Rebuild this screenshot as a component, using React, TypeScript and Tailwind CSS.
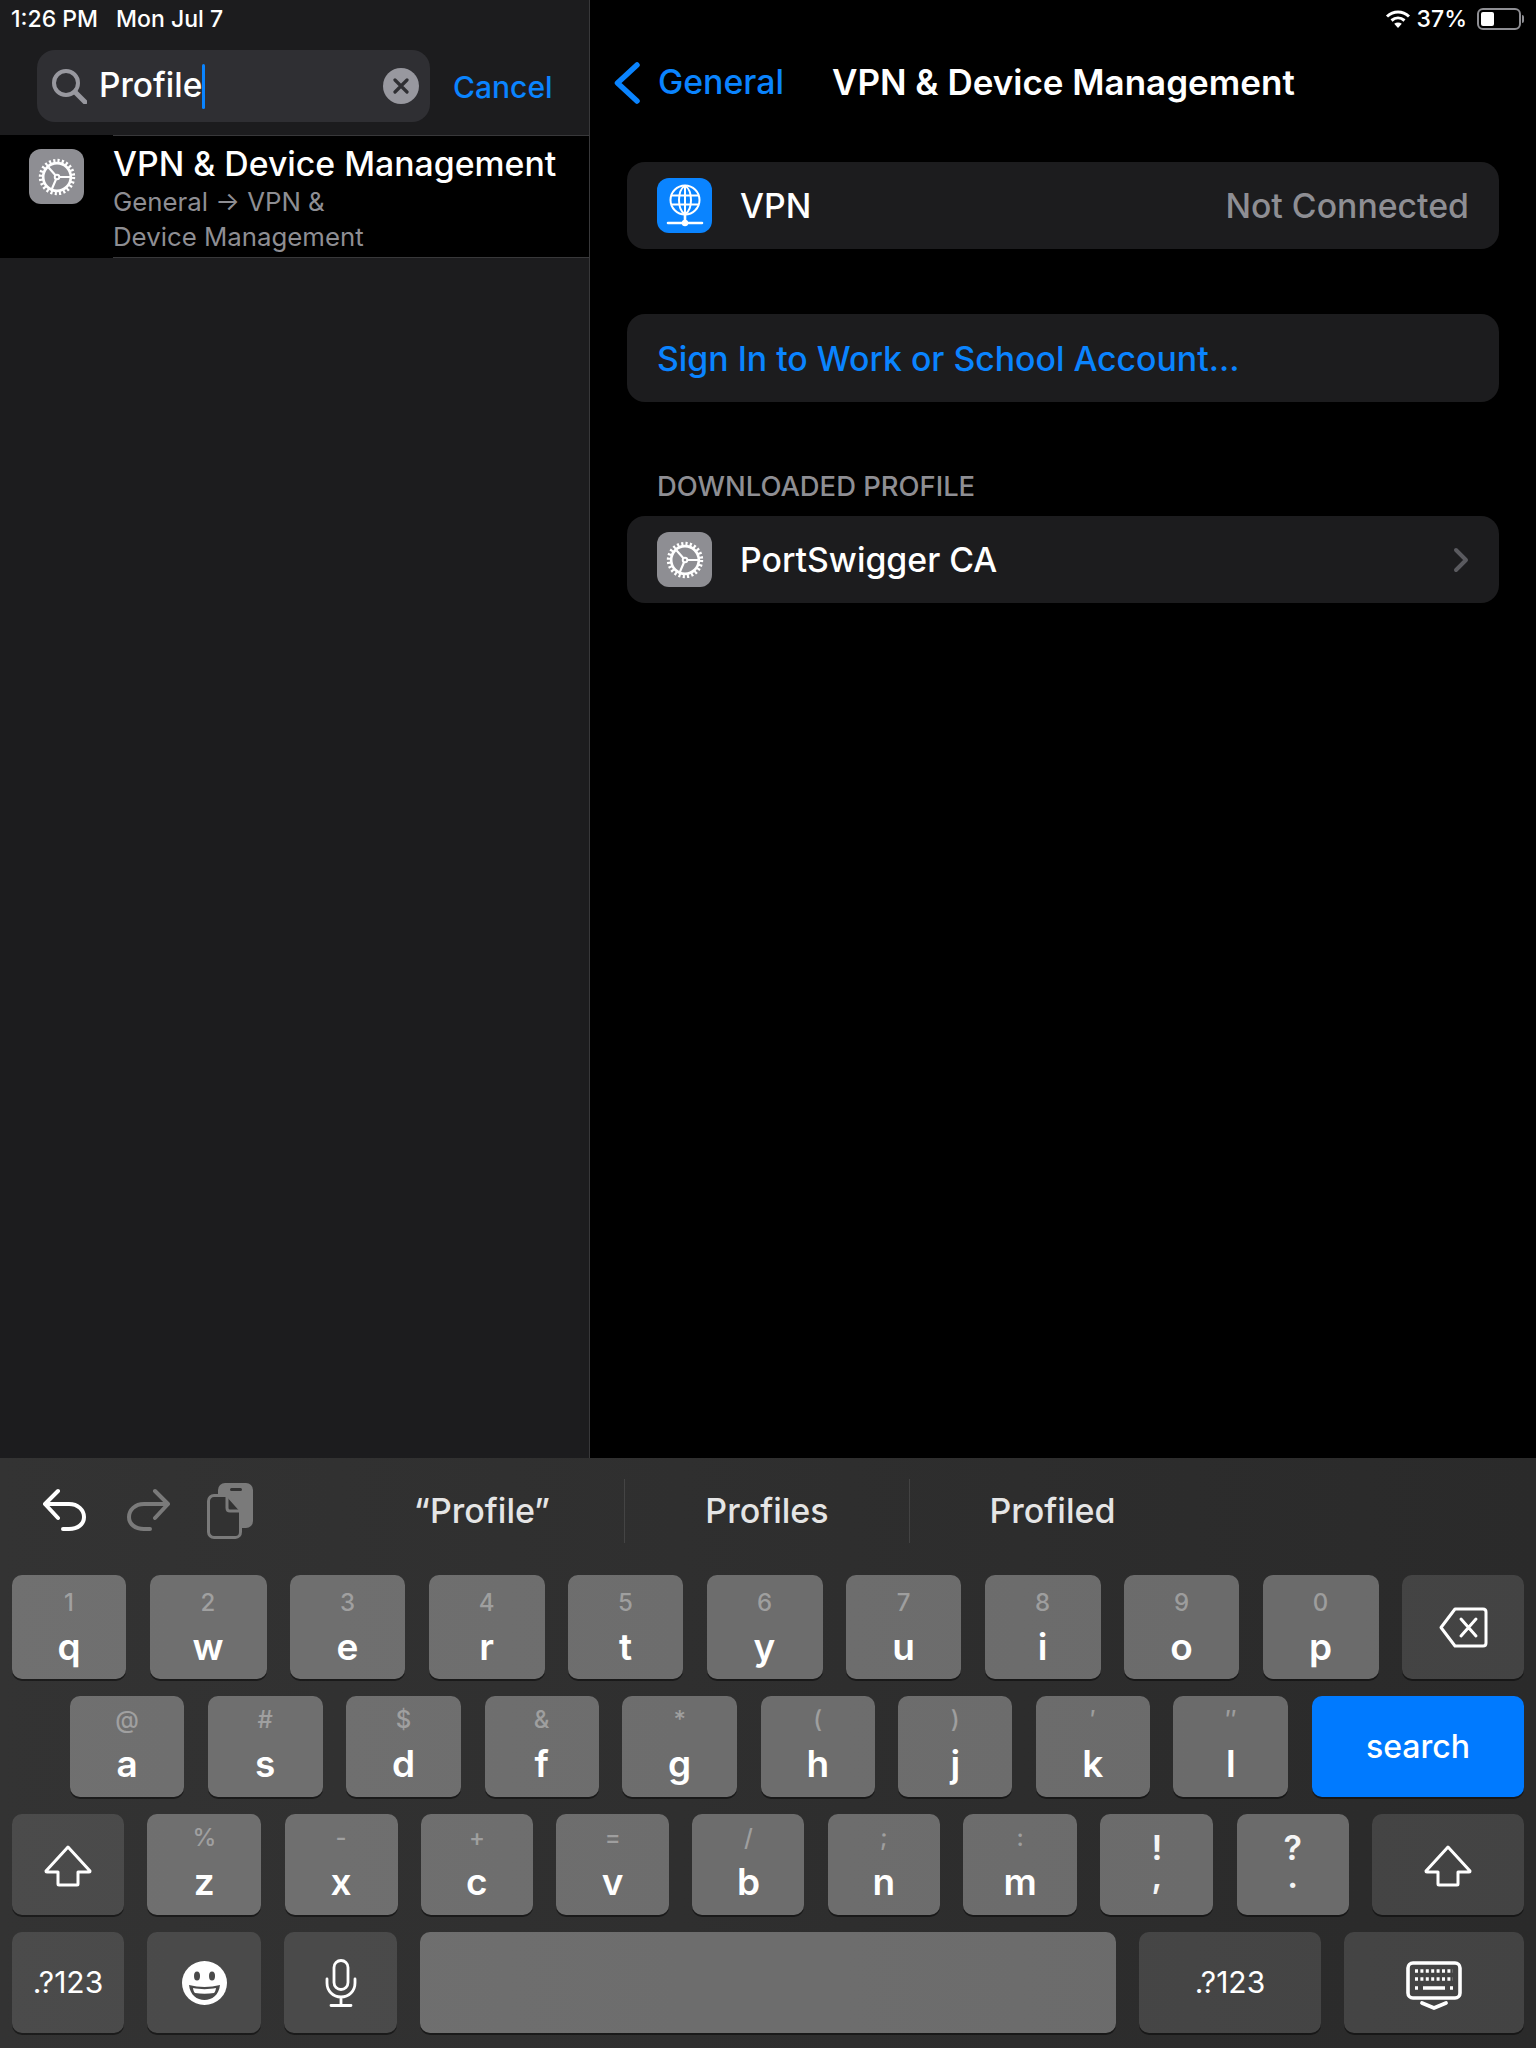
import type { ReactNode } from "react";

const GearIcon = ({ className }: { className: string }) => (
  <div className={`flex items-center justify-center rounded-[12px] bg-[#8e8e93] ${className}`}>
    <svg className="h-[42px] w-[42px]" viewBox="0 0 24 24" fill="none" stroke="white">
      <circle cx="12" cy="12" r="7.9" strokeWidth="1.5" />
      <circle cx="12" cy="12" r="9.3" strokeWidth="2.2" strokeDasharray="1.2 1.235" />
      <path d="M12 12 7.2 6.6M12 12h7.500M12 12l-3 7" strokeWidth="1.2" />
      <circle cx="12" cy="12" r="1.3" strokeWidth="1.1" fill="#8e8e93" />
    </svg>
  </div>
);

const GlobeIcon = () => (
  <div className="flex h-[55px] w-[55px] items-center justify-center rounded-[12px] bg-[#0a84ff]">
    <svg className="h-[46px] w-[46px]" viewBox="0 0 46 46" fill="none" stroke="white" strokeWidth="2">
      <circle cx="23" cy="17" r="14.5" />
      <path d="M23 2.5C15 8 15 26 23 31.5M23 2.5C31 8 31 26 23 31.5M23 2.5v29M9 12.5h28M9 21.5h28" />
      <path d="M23 32v6M6 40h34" strokeWidth="2.6" strokeLinecap="round" />
      <circle cx="23" cy="40" r="3.2" fill="white" stroke="none" />
    </svg>
  </div>
);

const UndoArrow = ({ color, className }: { color: string; className?: string }) => (
  <svg className={`h-[50px] w-[50px] ${className ?? ""}`} viewBox="0 0 50 50" fill="none" stroke={color} strokeWidth="4" strokeLinecap="round" strokeLinejoin="round">
    <path d="M18 5 5 18l13 14M5 18h24c9 0 15 6 15 13s-6 12-15 12h-6" />
  </svg>
);

const PasteIcon = () => (
  <svg className="h-[56px] w-[46px]" viewBox="0 0 46 56" fill="none">
    <rect x="11" y="0" width="35" height="45" rx="7" fill="#7a7a7a" />
    <rect x="23" y="5" width="12" height="3" rx="1.5" fill="#323232" />
    <path d="M7 12.5h13.5L33.5 27v22c0 3-2 5.500-5 5.500H7c-3 0-5.500-2.500-5.500-5.500V18c0-3 2.500-5.500 5.500-5.500z" fill="#323232" stroke="#7a7a7a" strokeWidth="3" />
    <path d="M20 13v12c0 2 1 3 3 3h10" stroke="#7a7a7a" strokeWidth="3" />
  </svg>
);

const DeleteIcon = () => (
  <svg className="h-[41px] w-[49px]" viewBox="0 0 49 41" fill="none" stroke="white" strokeWidth="3" strokeLinejoin="round" strokeLinecap="round">
    <path d="M16 2h28c2 0 3 1 3 3v31c0 2-1 3-3 3H16L2 20.500z" />
    <path d="M22 12l15 17M37 12 22 29" />
  </svg>
);

const ShiftIcon = () => (
  <svg className="mt-[2px] h-[42px] w-[48px]" viewBox="0 0 48 42" fill="none" stroke="white" strokeWidth="3" strokeLinejoin="round">
    <path d="M24 2 46 26a1 1 0 0 1-1 1H34v12a1 1 0 0 1-1 1H15a1 1 0 0 1-1-1V27H3a1 1 0 0 1-1-1z" />
  </svg>
);

const EmojiIcon = () => (
  <svg className="h-[44px] w-[45px]" viewBox="0 0 45 44">
    <ellipse cx="22.500" cy="22" rx="22.500" ry="22" fill="white" />
    <ellipse cx="15" cy="15" rx="3" ry="4.500" fill="#4a4a4a" />
    <ellipse cx="30" cy="15" rx="3" ry="4.500" fill="#4a4a4a" />
    <path d="M7 24c10 2.500 21 2.500 31 0-1 10-8 15-15.500 15S8 34 7 24z" fill="#4a4a4a" />
    <path d="M11 27c7 1.500 16 1.500 23 0-.5 3-1 4-2 5-6 1-13 1-19 0-1-1-1.500-2-2-5z" fill="white" />
  </svg>
);

const MicIcon = () => (
  <svg className="h-[48px] w-[32px]" viewBox="0 0 32 48" fill="none" stroke="white" strokeWidth="2.8" strokeLinecap="round">
    <rect x="9" y="1.500" width="14" height="29" rx="7" />
    <path d="M2 20v4c0 8 6 14 14 14s14-6 14-14v-4M16 38v8M6 46.500h20" />
  </svg>
);

const KeyboardIcon = () => (
  <svg className="mt-[6px] h-[50px] w-[56px]" viewBox="0 0 56 50" fill="none">
    <rect x="2" y="2" width="52" height="35" rx="5" stroke="white" strokeWidth="3.600" />
    <path d="M9 10h38M9 18h38" stroke="white" strokeWidth="3.400" strokeDasharray="3 2.400" />
    <path d="M9 27h3M17 27h22M44 27h3" stroke="white" strokeWidth="3.400" />
    <path d="M16 42l12 5 12-5" stroke="white" strokeWidth="3.800" strokeLinecap="round" strokeLinejoin="round" />
  </svg>
);

type LetterDef = { w: string; label: string; sub: string };

const row1: LetterDef[] = [
  { w: "w-[114px]", label: "q", sub: "1" },
  { w: "w-[117px]", label: "w", sub: "2" },
  { w: "w-[115px]", label: "e", sub: "3" },
  { w: "w-[116px]", label: "r", sub: "4" },
  { w: "w-[115px]", label: "t", sub: "5" },
  { w: "w-[116px]", label: "y", sub: "6" },
  { w: "w-[115px]", label: "u", sub: "7" },
  { w: "w-[116px]", label: "i", sub: "8" },
  { w: "w-[115px]", label: "o", sub: "9" },
  { w: "w-[116px]", label: "p", sub: "0" },
];

const row2: LetterDef[] = [
  { w: "w-[114px]", label: "a", sub: "@" },
  { w: "w-[115px]", label: "s", sub: "#" },
  { w: "w-[115px]", label: "d", sub: "$" },
  { w: "w-[114px]", label: "f", sub: "&" },
  { w: "w-[115px]", label: "g", sub: "*" },
  { w: "w-[114px]", label: "h", sub: "(" },
  { w: "w-[114px]", label: "j", sub: ")" },
  { w: "w-[114px]", label: "k", sub: "′" },
  { w: "w-[115px]", label: "l", sub: "″" },
];

const row3: LetterDef[] = [
  { w: "w-[114px]", label: "z", sub: "%" },
  { w: "w-[113px]", label: "x", sub: "-" },
  { w: "w-[112px]", label: "c", sub: "+" },
  { w: "w-[113px]", label: "v", sub: "=" },
  { w: "w-[112px]", label: "b", sub: "/" },
  { w: "w-[112px]", label: "n", sub: ";" },
  { w: "w-[114px]", label: "m", sub: ":" },
];

const LetterKey = ({ k, top }: { k: LetterDef; top: string }) => (
  <div className={`flex flex-col items-center rounded-[10px] bg-white/30 shadow-[0_2px_0_rgba(0,0,0,0.45)] ${k.w} ${top}`}>
    <span className="h-[28px] text-[24px] leading-[28px] font-medium text-white/35">{k.sub}</span>
    <span className="mt-[8px] text-[37px] leading-[44px] font-semibold text-white">{k.label}</span>
  </div>
);

// the two punctuation keys carry both characters in white, one above the other
const PunctuationKey = ({ w, text }: { w: string; text: string }) => (
  <div className={`rounded-[10px] bg-white/30 pt-[20px] text-center text-[34px] leading-[28px] font-semibold whitespace-pre-line text-[#f5f5f5] shadow-[0_2px_0_rgba(0,0,0,0.45)] ${w}`}>
    {text}
  </div>
);

const FnKey = ({ className, children }: { className: string; children: ReactNode }) => (
  <div className={`flex items-center justify-center rounded-[10px] bg-white/[0.12] text-white shadow-[0_2px_0_rgba(0,0,0,0.45)] ${className}`}>
    {children}
  </div>
);

export default function App() {
  return (
    <div className="flex h-[2048px] w-[1536px] flex-col overflow-hidden bg-black font-['Inter',sans-serif] text-white">
      <div className="flex h-[1458px]">
        {/* settings sidebar */}
        <aside className="flex w-[590px] flex-col border-r border-[#38383a] bg-[#1c1c1e]">
          <div className="flex h-[38px] items-center gap-[18px] pl-[11px] text-[23px] font-medium">
            <span>1:26 PM</span>
            <span>Mon Jul 7</span>
          </div>
          <div className="mt-[12px] flex items-center pl-[37px]">
            <div className="flex h-[72px] w-[393px] items-center rounded-[18px] bg-[#2f2f33] pl-[14px]">
              <svg className="h-[36px] w-[36px]" viewBox="0 0 36 36" fill="none" stroke="#98989f" strokeWidth="4" strokeLinecap="round">
                <circle cx="15" cy="15" r="12" />
                <path d="M24 24l10 10" strokeWidth="5" />
              </svg>
              <span className="ml-[12px] text-[33.5px] leading-none font-medium">Profile</span>
              <span className="h-[45px] w-[3px] rounded-full bg-[#0a84ff]" />
              <div className="ml-auto mr-[11px] flex h-[36px] w-[36px] items-center justify-center rounded-full bg-[#98989f]">
                <svg className="h-[16px] w-[16px]" viewBox="0 0 16 16" stroke="#2f2f33" strokeWidth="3.200" strokeLinecap="round">
                  <path d="M2 2l12 12M14 2 2 14" />
                </svg>
              </div>
            </div>
            <span className="ml-[23px] mt-[2px] text-[30px] leading-none font-medium text-[#0a84ff]">Cancel</span>
          </div>
          {/* search result */}
          <div className="mt-[13px] flex h-[123px] bg-black">
            <div className="w-[113px] pl-[29px] pt-[14px]">
              <GearIcon className="h-[55px] w-[55px]" />
            </div>
            <div className="flex-1 border-y border-[#38383a]">
              <p className="mt-[8px] text-[33.8px] leading-[40px] font-medium whitespace-nowrap">VPN &amp; Device Management</p>
              <p className="text-[25.8px] leading-[35px] text-[#8e8e93]">
                General → VPN &amp;
                <br />
                Device Management
              </p>
            </div>
          </div>
        </aside>

        <main className="flex flex-1 flex-col">
          <div className="flex h-[38px] items-center justify-end pr-[12px] text-[23px] font-medium">
            <svg className="h-[18px] w-[26px]" viewBox="0 0 26 18" fill="none" stroke="white" strokeWidth="3">
              <path d="M2 6.500c6.500-6 15.500-6 22 0M6.500 10.500c4-3.500 9-3.500 13 0" />
              <path d="M13 18l-3.800-4.200c2.300-1.600 5.300-1.600 7.600 0z" fill="white" stroke="none" />
            </svg>
            <span className="ml-[6px]">37%</span>
            <div className="ml-[10px] flex h-[22px] w-[44px] items-center rounded-[6px] border-2 border-[#8e8e93] p-[2px]">
              <div className="h-full w-[13px] rounded-[2px] bg-white" />
            </div>
            <div className="ml-[1px] h-[8px] w-[2px] rounded-r bg-[#8e8e93]" />
          </div>

          <div className="flex h-[89px] items-center pl-[24px]">
            <svg className="h-[42px] w-[26px]" viewBox="0 0 26 42" fill="none" stroke="#0a84ff" strokeWidth="5.500" strokeLinecap="round" strokeLinejoin="round">
              <path d="M23 3 3.500 21 23 39" />
            </svg>
            <span className="ml-[18px] text-[33.8px] font-medium text-[#0a84ff]">General</span>
            <span className="ml-[48px] text-[35px] font-semibold whitespace-nowrap">VPN &amp; Device Management</span>
          </div>

          <div className="mx-[37px] mt-[35px] flex h-[87px] items-center rounded-[18px] bg-[#1c1c1e] px-[30px]">
            <GlobeIcon />
            <span className="ml-[28px] mt-[2px] text-[33.8px] font-medium">VPN</span>
            <span className="ml-auto mt-[2px] text-[33.8px] font-medium text-[#8e8e93]">Not Connected</span>
          </div>

          <div className="mx-[37px] mt-[65px] flex h-[88px] items-center rounded-[18px] bg-[#1c1c1e] px-[30px]">
            <span className="mt-[2px] text-[33.8px] font-medium text-[#0a84ff]">Sign In to Work or School Account...</span>
          </div>

          <p className="mx-[67px] mt-[67px] text-[27.4px] leading-[34px] font-medium text-[#8e8e93]">DOWNLOADED PROFILE</p>

          <div className="mx-[37px] mt-[13px] flex h-[87px] items-center rounded-[18px] bg-[#1c1c1e] px-[30px]">
            <GearIcon className="h-[55px] w-[55px]" />
            <span className="ml-[28px] mt-[2px] text-[33.8px] font-medium">PortSwigger CA</span>
            <svg className="ml-auto h-[26px] w-[16px]" viewBox="0 0 16 26" fill="none" stroke="#5a5a5f" strokeWidth="4" strokeLinecap="round" strokeLinejoin="round">
              <path d="M3 3l10 10L3 23" />
            </svg>
          </div>
        </main>
      </div>

      {/* keyboard */}
      <div className="flex h-[590px] flex-col bg-gradient-to-r from-[#333333] to-[#2a2a2a]">
        <div className="flex h-[117px] items-center pb-[12px]">
          <div className="flex w-[340px] items-center pl-[40px]">
            <UndoArrow color="white" />
            <UndoArrow color="#7a7a7a" className="ml-[33px] -scale-x-100" />
            <div className="ml-[34px]">
              <PasteIcon />
            </div>
          </div>
          <div className="flex h-[64px] w-[285px] items-center justify-center border-r border-white/10 text-[34px] font-medium text-[#e5e5e5]">“Profile”</div>
          <div className="flex h-[64px] w-[285px] items-center justify-center border-r border-white/10 text-[34px] font-medium text-[#e5e5e5]">Profiles</div>
          <div className="flex h-[64px] w-[285px] items-center justify-center text-[34px] font-medium text-[#e5e5e5]">Profiled</div>
        </div>

        <div className="flex flex-col gap-[17px] px-[12px]">
          <div className="flex h-[104px] justify-between">
            {row1.map((k) => (
              <LetterKey k={k} top="pt-[14px]" key={k.label} />
            ))}
            <FnKey className="w-[122px]">
              <DeleteIcon />
            </FnKey>
          </div>

          <div className="flex h-[101px] justify-between pl-[58px]">
            {row2.map((k) => (
              <LetterKey k={k} top="pt-[10px]" key={k.label} />
            ))}
            <div className="flex w-[212px] items-center justify-center rounded-[10px] bg-[#007aff] text-[32px] font-medium shadow-[0_2px_0_rgba(0,0,0,0.45)]">search</div>
          </div>

          <div className="flex h-[101px] justify-between">
            <FnKey className="w-[112px]">
              <ShiftIcon />
            </FnKey>
            {row3.map((k) => (
              <LetterKey k={k} top="pt-[10px]" key={k.label} />
            ))}
            <PunctuationKey w="w-[113px]" text={"!\n,"} />
            <PunctuationKey w="w-[112px]" text={"?\n."} />
            <FnKey className="w-[152px]">
              <ShiftIcon />
            </FnKey>
          </div>

          <div className="flex h-[101px] justify-between">
            <FnKey className="w-[112px] text-[30px]">.?123</FnKey>
            <FnKey className="w-[114px]">
              <EmojiIcon />
            </FnKey>
            <FnKey className="w-[113px]">
              <MicIcon />
            </FnKey>
            <div className="w-[696px] rounded-[10px] bg-white/30 shadow-[0_2px_0_rgba(0,0,0,0.45)]" />
            <FnKey className="w-[182px] text-[30px]">.?123</FnKey>
            <FnKey className="w-[180px]">
              <KeyboardIcon />
            </FnKey>
          </div>
        </div>
      </div>
    </div>
  );
}
